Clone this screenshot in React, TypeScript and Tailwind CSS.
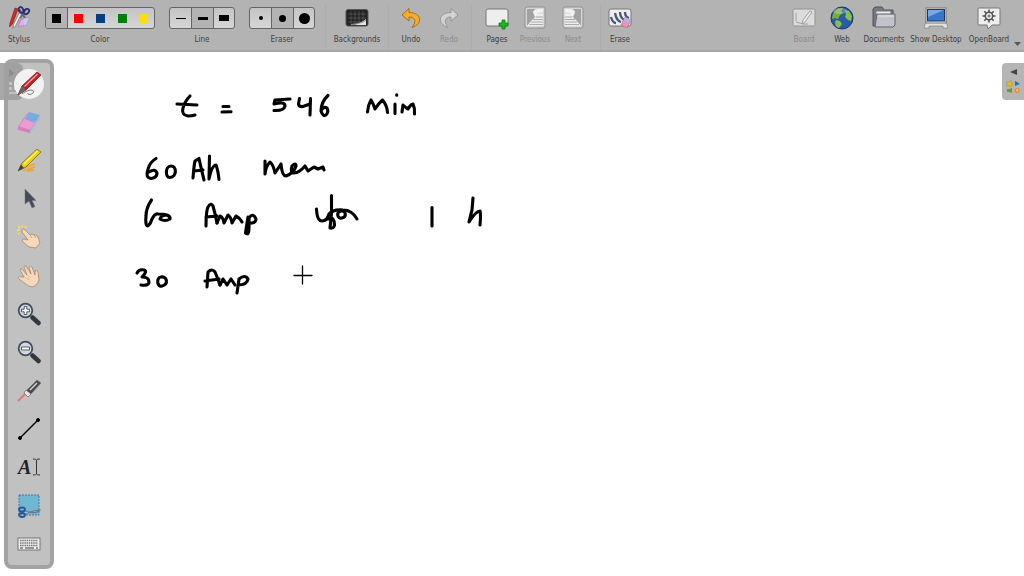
import { useState } from "react";
import type { ReactNode } from "react";

const INK = [
  "M190 96Q185 101 183 108Q181 115 188 116Q192 116 195 115M177 104L197 105",
  "M223 106.5H229M222 112L231 111.700",
  "M290 99L275 100L274 104Q285 101 285 106Q284 111 274 110.500",
  "M299.500 98.500L298.500 104Q299 107 303 106.500L310 104M310.500 98.500L310 115",
  "M328 95.500Q321 102 321 111Q323 117 326 115Q329 112 327 108Q324 106 321.500 110",
  "M367.500 112Q368 105 371 100Q374 105 375 109Q379 103 382.500 100Q387 105 387.500 112.500",
  "M395 104V113.500M396.700 94.800V95.300",
  "M402 112L403 105Q406 108 408 109Q410 105 413 104Q415 108 414.500 114",
  "M156 158.500Q150 162 148 169Q145 178 151 178.500Q157 178 157 173Q155 168 149 172",
  "M171 166C165 166 165 178 170 177.500C177 177 177 166 171 166",
  "M193 178Q194 165 195 161L199 158.500Q201 168 204 180M194 171L203 170",
  "M209.500 156L209 179Q212 165 216 165Q218 170 219 179.500",
  "M265 161V174Q266 166 270 162Q273 164 275 173L281 164Q282 176 286 176Q294 173 296 166Q296 162 292 166Q290 173 294 173Q299 173 305 166L308 171L314 167L318 169L323 167L324 170",
  "M151.500 200Q146 208 146 216Q145 226 148 226Q151 223 152 219Q155 213 158 214Q171 214 170 219Q165 222 160 219Q161 215 167 215",
  "M206 226Q206 211 208 207Q211 202 213 206Q215 213 217 223M206 217L217 216",
  "M217 223L220 216Q223 217 224 223L228 215Q231 217 232 223L236 216Q240 218 242 222",
  "M248 217L245.500 233Q249 236 249 228L249 218Q253 212 256 219Q256 224 247 223",
  "M316.500 209Q317 221 322 221Q327 221 329 214Q333 209 343 210Q352 210 357 219",
  "M331.500 195.500V213L330 228Q336 229 334 221Q332 216 328 219M341 211C336 212 337 219 342 218C347 217 346 210 341 211",
  "M432 207.500V226",
  "M473 198L472 210L469 222Q476 211 480 211Q481 215 480 225",
  "M137 273Q139 269 144 270Q148 271 142 277Q149 277 149 282Q149 286 141 285",
  "M161 277C156 277 157 288 162 286C169 284 167 276 161 277",
  "M207 287L208 272Q212 268 215 272Q218 279 220 285M205 281L219 279",
  "M220 285L223 279L227 285L231 279L235 285",
  "M239 279L237 293M239 279Q245 274 248 279Q247 285 238 285",
];

function Handwriting() {
  return (
    <svg
      viewBox="130 90 370 210"
      className="ml-[130px] mt-[38px] block h-[210px] w-[370px]"
      role="img"
      aria-label="Handwritten notes"
      fill="none"
      stroke="#000"
      strokeLinecap="round"
      strokeLinejoin="round"
    >
      <g strokeWidth="3.1">
        {INK.map((d) => (
          <path key={d} d={d} />
        ))}
      </g>
      <path d="M294 275.500H312M302.500 266V284" strokeWidth="1.3" />
    </svg>
  );
}

function Stylus() {
  return (
    <svg viewBox="0 0 24 24" className="size-6">
      <path d="M12 3l6 9M19 3l-6 9" stroke="#667" strokeWidth="2" />
      <ellipse cx="14" cy="4" rx="2.200" ry="3" fill="none" stroke="#27316f" strokeWidth="1.800" transform="rotate(-25 14 4)" />
      <ellipse cx="19.500" cy="5.500" rx="2.200" ry="3" fill="none" stroke="#27316f" strokeWidth="1.800" transform="rotate(40 19.500 5.500)" />
      <path d="M8 2l3 1-5.500 15-3 3 .500-4z" fill="#d42a20" stroke="#7d1712" strokeWidth=".6" />
      <path d="M12 7l2.500 1-6 12-2.500 2.500.500-4z" fill="#eee" stroke="#666" strokeWidth=".7" />
      <path d="M14 13l8-1-3 7-8 2z" fill="#e9a8e6" stroke="#a874b1" strokeWidth=".6" />
      <path d="M17 12.600l5-.600-3 7-2 .500z" fill="#b9d0f0" />
    </svg>
  );
}

function Backgrounds() {
  return (
    <svg viewBox="0 0 24 20" className="h-5 w-6">
      <rect x="1" y="1.500" width="22" height="16.500" rx="2" fill="#222" stroke="#555" />
      <path d="M3 6h18M3 10h18M3 14h18M6 3v14M10 3v14M14 3v14M18 3v14" stroke="#666" strokeWidth=".6" />
      <path d="M4 17c7 0 12-2 17-6v6z" fill="#e6e6e6" />
      <path d="M6 16.500c6-.500 11-1.500 15-4" stroke="#999" fill="none" />
    </svg>
  );
}

function Arrow({ redo = false }: { redo?: boolean }) {
  return (
    <svg viewBox="0 0 22 22" className="size-[22px]">
      <g transform={redo ? "translate(22 0) scale(-1 1)" : undefined}>
        <path
          d="M9 1.500L2 8l7 6v-4c6 0 8 4 3 10.500C23 17 22 5.500 9 5.500z"
          fill={redo ? "#d3d3d3" : "#f7ad2c"}
          stroke={redo ? "#989898" : "#a96d12"}
          strokeWidth="1"
          strokeLinejoin="round"
        />
      </g>
    </svg>
  );
}

function Pages() {
  return (
    <svg viewBox="0 0 26 24" className="h-6 w-[26px]">
      <rect x="2" y="3" width="22" height="17" rx="2" fill="#eee" stroke="#777" />
      <path d="M18 14h3v3h3v3h-3v3h-3v-3h-3v-3h3z" fill="#16bb18" stroke="#087611" strokeWidth=".8" />
    </svg>
  );
}

function Steps({ next = false }: { next?: boolean }) {
  return (
    <svg viewBox="0 0 22 24" className="h-6 w-[22px]">
      <rect x="1" y="1" width="20" height="21" rx="2" fill="#d6d6d6" stroke="#8f8f8f" />
      <g transform={next ? "translate(22 0) scale(-1 1)" : undefined}>
        <path d="M3 3h16v17H3z" fill="#dedede" />
        <path d="M3 3h8l-2 4 2 4-8 9z" fill="#a2a2a2" />
        <path d="M9 5l5-2h5v3l-6 1 1 2-3 1z" fill="#f2f2f2" />
        <path d="M14 8h5v12H3l5-6 4-3z" fill="#ededed" />
        <path d="M12 11h7M9 13.500h10M7 16h12M5 18.500h14" stroke="#aaa" />
      </g>
    </svg>
  );
}

function Erase() {
  return (
    <svg viewBox="0 0 26 24" className="h-6 w-[26px]">
      <rect x="2" y="3" width="22" height="17" rx="2" fill="#eee" stroke="#777" />
      <path d="M4 11c1 4 2 6 5 6M8 7c1 5 2 8 6 9M13 6c0 4 1 6 4 8M18 6c0 3 1 5 4 6" fill="none" stroke="#4b5878" strokeWidth="2.300" />
      <path d="M18 11l6 3-4 8-6-3z" fill="#f391b7" stroke="#b15e87" strokeWidth=".6" />
      <path d="M18 11l6 3-1.500 3-6-3z" fill="#a9b9e7" />
    </svg>
  );
}

function Board() {
  return (
    <svg viewBox="0 0 26 24" className="h-6 w-[26px]">
      <rect x="2" y="3" width="22" height="17" rx="1.500" fill="#dcdcdc" stroke="#929292" />
      <path d="M21 6L14 16l-3 2 1-4 7-9z" fill="#eee" stroke="#8c8c8c" strokeWidth=".8" />
      <path d="M5 7v8M5 16l7 2h5" stroke="#a0a0a0" fill="none" />
    </svg>
  );
}

function Web() {
  return (
    <svg viewBox="0 0 24 24" className="size-6">
      <circle cx="12" cy="12" r="11" fill="#285da5" stroke="#1a3763" />
      <path d="M4 6c3-4 6-4 9-4l-2 3 2 2-3 2-2 4-3-1-3 1c0-3 1-5 2-7z" fill="#79ad3d" />
      <path d="M15 4l4 1 3 5-1 5-3-1-3-3 1-3zM6 14l4 1 2 3-3 4c-3-1-5-4-3-8z" fill="#8abd4a" />
      <ellipse cx="10" cy="5" rx="7" ry="3" fill="#fff" opacity=".25" />
    </svg>
  );
}

function Documents() {
  return (
    <svg viewBox="0 0 26 24" className="h-6 w-[26px]">
      <path d="M2 20V3l2-2h7l2 3h9v16z" fill="#777982" stroke="#515257" />
      <path d="M5 8V5h15v3" fill="#eee" stroke="#777" />
      <path d="M4 21l2-13h18v11l-2 2z" fill="#c1c2cb" stroke="#62636a" />
      <path d="M7 10h16" stroke="#e4e4ec" />
    </svg>
  );
}

function Desktop() {
  return (
    <svg viewBox="0 0 26 24" className="h-6 w-[26px]">
      <path d="M3 15L1 22h5v-2h14v2h5l-2-7z" fill="#e3e3e3" stroke="#888" strokeWidth=".8" />
      <rect x="3" y="2" width="20" height="15" fill="#eee" stroke="#777" />
      <rect x="4.500" y="3.500" width="17" height="11.500" fill="#3976c4" stroke="#20345c" />
      <path d="M5 4h16L5 11z" fill="#78aae2" />
    </svg>
  );
}

function OpenBoardIcon() {
  return (
    <svg viewBox="0 0 26 24" className="h-6 w-[26px]">
      <path d="M3 2h20q1 0 1 1v15q0 1-1 1h-7l-4 4-1-4H3q-1 0-1-1V3q0-1 1-1z" fill="#eee" stroke="#777" />
      <g stroke="#555" fill="none">
        <circle cx="13" cy="10" r="3.700" strokeWidth="1.600" />
        <circle cx="13" cy="10" r="1" strokeWidth="1" />
        <path d="M13 3.500v3M13 13.500v3M6.500 10h3M16.500 10h3M8.300 5.300l2 2M15.700 12.700l2 2M17.700 5.300l-2 2M10.300 12.700l-2 2" strokeWidth="1.600" />
      </g>
    </svg>
  );
}

function ToolbarButton({ label, width, children, disabled = false }: { label: string; width: string; children: ReactNode; disabled?: boolean }) {
  return (
    <button type="button" disabled={disabled} className={`flex shrink-0 flex-col items-center ${width} ${disabled ? "text-[#8b8b8b]" : "text-[#404040]"}`}>
      <span className="flex h-7 items-center">{children}</span>
      <span className="mt-[2px] whitespace-nowrap text-[8px] leading-3">{label}</span>
    </button>
  );
}

function Choices({ label, items, selected, divided = true }: { label: string; items: { name: string; mark: string }[]; selected: number; divided?: boolean }) {
  const [active, setActive] = useState(selected);
  return (
    <div role="group" aria-label={label} className="flex shrink-0 flex-col items-center text-[#404040]">
      <div className="flex h-7 items-center">
        <div className="flex h-[22px] overflow-hidden rounded-[3px] border border-[#656565] bg-linear-to-b from-[#c4c4c4] to-[#d6d6d6]">
          {items.map((item, i) => (
            <button
              key={item.name}
              type="button"
              aria-label={item.name}
              aria-pressed={active === i}
              onClick={() => setActive(i)}
              className={`flex w-[22px] items-center justify-center first:w-[21px] last:w-[21px] ${i > 0 && (divided || i === 1) ? "border-l border-[#656565]" : ""} ${active === i ? "bg-[#b3b3b3]" : ""}`}
            >
              <span className={item.mark} />
            </button>
          ))}
        </div>
      </div>
      <span className="mt-[2px] text-[8px] leading-3">{label}</span>
    </div>
  );
}

function Divider() {
  return <span className="w-px shrink-0 self-stretch bg-[#acacac]" />;
}

const COLORS = [
  { name: "Black", mark: "size-[9px] bg-black" },
  { name: "Red", mark: "size-[9px] bg-[#ff0000]" },
  { name: "Blue", mark: "size-[9px] bg-[#004080]" },
  { name: "Green", mark: "size-[9px] bg-[#008000]" },
  { name: "Yellow", mark: "size-[9px] bg-[#ffdd00]" },
];
const LINES = [
  { name: "Thin line", mark: "h-px w-[10px] bg-black" },
  { name: "Medium line", mark: "h-[3px] w-[10px] bg-black" },
  { name: "Thick line", mark: "h-[6px] w-[10px] bg-black" },
];
const ERASERS = [
  { name: "Small eraser", mark: "size-1 rounded-full bg-black" },
  { name: "Medium eraser", mark: "size-[7px] rounded-full bg-black" },
  { name: "Large eraser", mark: "size-[11px] rounded-full bg-black" },
];

function Toolbar() {
  return (
    <header className="flex h-[52px] items-start border-b-2 border-[#a6a6a6] bg-[#b3b3b3] pr-[3px] font-['DejaVu_Sans_Condensed','DejaVu_Sans',sans-serif]">
      <div className="flex shrink-0 items-start self-stretch pt-1">
        <ToolbarButton label="Stylus" width="w-[38px]"><Stylus /></ToolbarButton>
        <div className="ml-[7px] mr-[10px] flex gap-[14px]">
          <Choices label="Color" items={COLORS} selected={0} divided={false} />
          <Choices label="Line" items={LINES} selected={1} />
          <Choices label="Eraser" items={ERASERS} selected={1} />
        </div>
        <Divider />
        <ToolbarButton label="Backgrounds" width="w-[62px]"><Backgrounds /></ToolbarButton>
        <Divider />
        <div className="mx-[3px] flex">
          <ToolbarButton label="Undo" width="w-[38px]"><Arrow /></ToolbarButton>
          <ToolbarButton label="Redo" width="w-[38px]" disabled><Arrow redo /></ToolbarButton>
        </div>
        <Divider />
        <div className="ml-[6px] mr-2 flex">
          <ToolbarButton label="Pages" width="w-[38px]"><Pages /></ToolbarButton>
          <ToolbarButton label="Previous" width="w-[38px]" disabled><Steps /></ToolbarButton>
          <ToolbarButton label="Next" width="w-[38px]" disabled><Steps next /></ToolbarButton>
        </div>
        <Divider />
        <ToolbarButton label="Erase" width="w-[38px]"><Erase /></ToolbarButton>
      </div>
      <div className="ml-auto flex shrink-0 items-start pt-1">
        <ToolbarButton label="Board" width="w-[38px]" disabled><Board /></ToolbarButton>
        <ToolbarButton label="Web" width="w-[38px]"><Web /></ToolbarButton>
        <ToolbarButton label="Documents" width="w-[46px]"><Documents /></ToolbarButton>
        <ToolbarButton label="Show Desktop" width="w-[58px]"><Desktop /></ToolbarButton>
        <ToolbarButton label="OpenBoard" width="w-[48px]"><OpenBoardIcon /></ToolbarButton>
        <button type="button" aria-label="More" className="flex h-11 w-2 items-end justify-center pb-[2px]">
          <svg viewBox="0 0 7 4" className="h-1 w-[7px]"><path d="M0 0h7L3.500 4z" fill="#555" /></svg>
        </button>
      </div>
    </header>
  );
}

function Magnifier({ plus = false }: { plus?: boolean }) {
  return (
    <>
      <path d="M15.500 15.500l6 5.500" stroke="#34383d" strokeWidth="4.500" strokeLinecap="round" />
      <circle cx="8.500" cy="8.500" r="6.800" fill="#d5d8dc" stroke="#424b59" strokeWidth="1.800" />
      <path d={plus ? "M7.200 4.500h2.600v2.700h2.700v2.600H9.800v2.700H7.200V9.800H4.500V7.200h2.700z" : "M4.500 7h8v3h-8z"} fill="#fff" stroke="#424b59" strokeWidth=".9" />
    </>
  );
}

const TOOLS: { name: string; art: ReactNode }[] = [
  {
    name: "Pen",
    art: (
      <>
        <path d="M5 22c6-5 14-5 11-1-2 2-6 2-5 0" fill="none" stroke="#777" />
        <path d="M20 0l4 3L9 18l-8 5 4-9z" fill="#c51e24" stroke="#681419" strokeWidth=".7" />
        <path d="M20.500 2L7.500 14.500" stroke="#f59a9a" strokeWidth="1.500" />
        <path d="M5 14l4 4-8 5z" fill="#666" />
      </>
    ),
  },
  {
    name: "Eraser",
    art: (
      <>
        <path d="M10 4l13 2-10 14-12-3z" fill="#ee9bd4" stroke="#b77daa" strokeWidth=".6" />
        <path d="M12 2l11 3-5 8-10-4z" fill="#77acdf" />
        <path d="M1 16l12 4v3L1 20z" fill="#d780bd" />
        <path d="M13 20l10-15v4L13 23z" fill="#b9b2d8" />
      </>
    ),
  },
  {
    name: "Highlighter",
    art: (
      <>
        <path d="M3 20l15-5M6 22l12-4M10 22l7-1" stroke="#eda92d" strokeWidth="1.800" />
        <path d="M20 0l4 3L9 18l-8 4 4-8z" fill="#f0cf09" stroke="#685d17" strokeWidth=".7" />
        <path d="M20.500 2L7 15" stroke="#fff37c" strokeWidth="1.300" />
        <path d="M4 15.500l3 3.500-6 3z" fill="#444" />
      </>
    ),
  },
  { name: "Select", art: <path d="M8 2v15l4-3 3 7 3-1.500-3-6h4z" fill="#444b5b" stroke="#6f7480" strokeWidth=".5" /> },
  {
    name: "Interact",
    art: (
      <>
        <path d="M5 0v3M0 5h3M1 1l2 2M9 1L8 3M1 9l2-1" stroke="#f2dc4d" strokeWidth="1.800" />
        <path d="M5 5q1-2 3 0l5 5q2-2 4 0 2-1 4 2l2 6-4 5-7-1-7-6q0-2 2-2l4 1-6-8z" fill="#f5d8bd" stroke="#a98669" strokeWidth=".8" />
        <path d="M13 10l2 3M17 10l2 3" stroke="#b48b6b" strokeWidth=".6" />
      </>
    ),
  },
  {
    name: "Scroll page",
    art: (
      <>
        <path d="M7 13L3 6q0-2 2-1l5 6L7 3q0-2 2-1l5 8-2-7q1-2 3 0l3 8V7q2-2 3 1l1 8q-2 6-7 7c-5-1-8-5-13-8-2-2 0-3 2-2z" fill="#f5d8bd" stroke="#a98669" strokeWidth=".8" />
        <path d="M7 13l6 3M10 11l4 3" stroke="#d2a98b" strokeWidth=".6" />
      </>
    ),
  },
  { name: "Zoom in", art: <Magnifier plus /> },
  { name: "Zoom out", art: <Magnifier /> },
  {
    name: "Laser pointer",
    art: (
      <>
        <path d="M1 22l10-10" stroke="#df7878" strokeWidth="2" />
        <path d="M20 1l4 3-11 12-4-4z" fill="#444a50" stroke="#777" strokeWidth=".6" />
        <path d="M9 11l5 4-3 3-4-4z" fill="#e8e8e8" stroke="#666" strokeWidth=".7" />
        <path d="M20 4l-7 7" stroke="#d5d5d5" strokeWidth="1.500" />
      </>
    ),
  },
  {
    name: "Draw line",
    art: (
      <g fill="#000" stroke="#000">
        <path d="M3 21L21 3" strokeWidth="1.500" />
        <circle cx="3" cy="21" r="1.500" />
        <circle cx="21" cy="3" r="1.500" />
      </g>
    ),
  },
  {
    name: "Write text",
    art: (
      <>
        <text x="1" y="19" fontSize="20" fontStyle="italic" fontWeight="bold" fill="#222" className="font-['Liberation_Serif',serif]">A</text>
        <path d="M16 4q3 0 3.500 1Q20 4 23 4M19.500 5v14M16 20q3 0 3.500-1Q20 20 23 20" stroke="#333" fill="none" />
      </>
    ),
  },
  {
    name: "Capture",
    art: (
      <>
        <rect x="2" y="1" width="20" height="20" fill="#70b8d2" stroke="#3978bb" strokeDasharray="2 1" />
        <path d="M7 20c5-1 10-4 16-4-3 3-9 3-15 1" fill="#c7d0d8" stroke="#6c7784" strokeWidth="1.200" />
        <ellipse cx="5" cy="15.500" rx="3" ry="2" fill="none" stroke="#255b93" strokeWidth="1.800" />
        <ellipse cx="5" cy="21" rx="3" ry="2" fill="none" stroke="#255b93" strokeWidth="1.800" />
      </>
    ),
  },
  {
    name: "Virtual keyboard",
    art: (
      <>
        <rect x="1" y="6" width="22" height="12" fill="#eee" stroke="#777" />
        <path d="M3 8.500h18M3 11h18M3 13.500h18" stroke="#777" strokeWidth="1.500" strokeDasharray="1.500 .700" />
        <path d="M3 16h3M8 16h9M19 16h2" stroke="#777" strokeWidth="1.300" />
      </>
    ),
  },
];

function Palette() {
  const [active, setActive] = useState("Pen");
  return (
    <nav aria-label="Drawing tools" className="absolute inset-y-[7px] left-1 flex w-[50px] flex-col items-center justify-between rounded-lg border-4 border-[#9f9f9f]/85 bg-[#b2b2b2]/80 py-[2px]">
      {TOOLS.map((tool) => (
        <button
          key={tool.name}
          type="button"
          aria-label={tool.name}
          aria-pressed={active === tool.name}
          onClick={() => setActive(tool.name)}
          className="flex size-[38px] items-center justify-center"
        >
          <span className={`flex size-[30px] items-center justify-center rounded-full ${active === tool.name ? "bg-[#f2f2f2]" : ""}`}>
            <svg viewBox="0 0 24 24" className="size-6">{tool.art}</svg>
          </span>
        </button>
      ))}
    </nav>
  );
}

export default function App() {
  return (
    <div className="flex min-h-screen flex-col bg-white font-['DejaVu_Sans',sans-serif]">
      <Toolbar />
      <main className="relative min-h-[524px] flex-1">
        <Handwriting />
        <button type="button" aria-label="Open page panel" className="absolute left-0 top-[11px] flex h-[37px] w-[23px] items-center justify-end rounded-r-md bg-[#a9a9a9]">
          <span className="flex h-full w-[15px] items-center rounded-r-md bg-[#606060]">
            <svg viewBox="0 0 15 28" className="h-7 w-[15px]">
              <path d="M1 1l6 4-6 4z" fill="#000" />
              <path d="M1 14h3v3H1zM6 14h5v3H6zM1 19h3v3H1zM6 19h5v3H6zM1 24h9v2H1z" fill="#fff" />
            </svg>
          </span>
        </button>
        <Palette />
        <button type="button" aria-label="Open library panel" className="absolute right-0 top-[11px] flex h-[37px] w-[22px] items-center justify-center rounded-l-[4px] bg-[#b5b5b5]">
          <svg viewBox="0 0 16 28" className="h-7 w-4">
            <path d="M12 1v6L5 4z" fill="#444" />
            <path d="M2 14h2l1-1h2v5H2z" fill="#e9be13" stroke="#ad8c16" strokeWidth=".5" />
            <path d="M10 13l5 3-5 2z" fill="#1676b9" />
            <path d="M7 20v5l-3-1H2v-3h2z" fill="#77932b" />
            <circle cx="12" cy="22.500" r="2.500" fill="#ee8b24" />
            <path d="M12 21v2h1" stroke="#fff" strokeWidth=".7" fill="none" />
          </svg>
        </button>
      </main>
    </div>
  );
}
